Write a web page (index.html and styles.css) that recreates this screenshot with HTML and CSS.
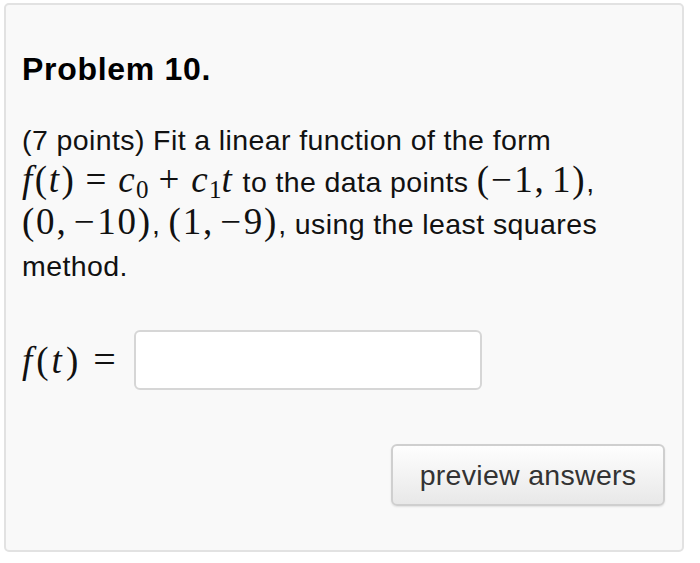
FILE: index.html
```html
<!DOCTYPE html>
<html>
<head>
<meta charset="utf-8">
<link rel="stylesheet" href="styles.css">
</head>
<body>
<div class="card">
  <h1 class="title">Problem 10.</h1>
  <p class="text">(7 points) Fit a linear function of the form <span class="m"><i>f</i>(<i>t</i>)<span class="op">=</span><i>c</i><sub>0</sub><span class="op">+</span><i>c</i><sub>1</sub><i>t</i></span> to the data points <span class="m">(<span class="neg">−</span>1,<span class="th"></span>1)</span>, <span class="m">(0,<span class="th"></span><span class="neg">−</span>10)</span>, <span class="m">(1,<span class="th"></span><span class="neg">−</span>9)</span>, using the least squares method.</p>
  <div class="answer">
    <span class="m wide"><i>f</i>(<i>t</i>)<span class="op last">=</span></span>
    <span class="field"></span>
  </div>
  <div class="actions">
    <button class="btn">preview answers</button>
  </div>
</div>
</body>
</html>
```
FILE: styles.css
```css
html, body {
  margin: 0;
  background: #fff;
}
body {
  padding: 3px 16px 11px 4px;
  font-family: "Liberation Sans", Arial, sans-serif;
  color: #000;
}
.card {
  box-sizing: border-box;
  height: 549px;
  background: #f9f9f9;
  border: 2px solid #e2e2e2;
  border-radius: 5px;
  padding: 0 15px 0 16px;
  display: flex;
  flex-direction: column;
}
.title {
  margin: 45px 0 0;
  font-size: 32px;
  font-weight: bold;
  letter-spacing: 0.7px;
  line-height: 38px;
}
.text {
  margin: 31px 0 0;
  font-size: 28.5px;
  letter-spacing: 0.4px;
  line-height: 42px;
  color: #111;
}
.m {
  font-family: "Liberation Serif", "Times New Roman", serif;
  font-size: 37px;
  letter-spacing: 1.8px;
  line-height: 1;
  white-space: nowrap;
  color: #111;
}
.m i {
  letter-spacing: 2.4px;
}
.m sub {
  font-size: 25px;
  vertical-align: -6px;
  line-height: 0;
  letter-spacing: 0;
  margin-left: -1px;
}
.op {
  margin: 0 0.27em;
}
.op.last {
  margin-right: 0;
}
.neg {
  margin: 0 0.02em 0 0;
}
.th {
  display: inline-block;
  width: 0.17em;
}
.answer {
  margin-top: 43px;
  display: flex;
  align-items: center;
  gap: 15px;
}
.m.wide {
  letter-spacing: 3px;
}
.m.wide i {
  letter-spacing: 4px;
}
.m.wide .op {
  margin-left: 0.3em;
  font-size: 40px;
}
.field {
  display: block;
  width: 348px;
  height: 60px;
  box-sizing: border-box;
  background: #fff;
  border: 2px solid #d6d6d6;
  border-radius: 6px;
}
.actions {
  display: flex;
  justify-content: flex-end;
  margin-top: 54px;
  padding-right: 2px;
}
.btn {
  width: 274px;
  height: 62px;
  font-family: "Liberation Sans", Arial, sans-serif;
  font-size: 28.5px;
  letter-spacing: 0.3px;
  color: #333;
  background: linear-gradient(#fefefe, #e8e8e8);
  border: 2px solid #cfcfcf;
  border-radius: 6px;
  box-shadow: 0 1px 2px rgba(0,0,0,0.1);
  padding: 0;
}
```
